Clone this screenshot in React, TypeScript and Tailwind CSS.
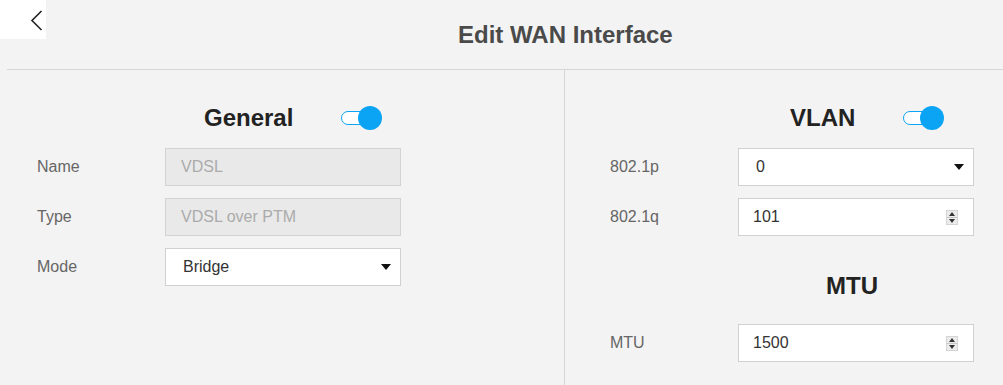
import React from 'react';

function Toggle() {
  return (
    <div className="relative w-[41px] h-[24px] shrink-0">
      <div className="absolute left-0 top-[5px] w-[32px] h-[14px] rounded-full border-[1.5px] border-[#0ba4f4] bg-white" />
      <div className="absolute right-0 top-0 w-[24px] h-[24px] rounded-full bg-[#0ba4f4]" />
    </div>
  );
}

function Caret() {
  return (
    <svg width="10" height="6" viewBox="0 0 10 6" className="shrink-0">
      <path d="M0 0 L10 0 L5 6 Z" fill="#111" />
    </svg>
  );
}

function Spinner() {
  return (
    <div className="w-[12px] h-[15px] shrink-0 flex flex-col border border-[#d4d4d4] bg-[#ececec]">
      <div className="flex-1 flex items-center justify-center border-b border-[#c8c8c8]">
        <svg width="6" height="4" viewBox="0 0 6 4"><path d="M0 4 L6 4 L3 0 Z" fill="#333" /></svg>
      </div>
      <div className="flex-1 flex items-center justify-center">
        <svg width="6" height="4" viewBox="0 0 6 4"><path d="M0 0 L6 0 L3 4 Z" fill="#333" /></svg>
      </div>
    </div>
  );
}

type Field =
  | { label: string; kind: 'disabled'; value: string }
  | { label: string; kind: 'select'; value: string }
  | { label: string; kind: 'number'; value: string };

function Row({ f }: { f: Field }) {
  return (
    <div className="flex items-center">
      <div className="w-[128px] text-[16px] text-[#666]">{f.label}</div>
      {f.kind === 'disabled' && (
        <div className="w-[236px] h-[38px] flex items-center pl-[15px] bg-[#e9e9e9] border border-[#d3d3d3] text-[16px] text-[#ababab]">
          {f.value}
        </div>
      )}
      {f.kind === 'select' && (
        <div className="w-[236px] h-[38px] flex items-center justify-between pl-[17px] pr-[9px] bg-white border border-[#d0d0d0] text-[16px] text-[#333]">
          <span>{f.value}</span>
          <Caret />
        </div>
      )}
      {f.kind === 'number' && (
        <div className="w-[236px] h-[38px] flex items-center justify-between pl-[14px] pr-[15px] bg-white border border-[#d0d0d0] text-[16px] text-[#333]">
          <span>{f.value}</span>
          <Spinner />
        </div>
      )}
    </div>
  );
}

const general: Field[] = [
  { label: 'Name', kind: 'disabled', value: 'VDSL' },
  { label: 'Type', kind: 'disabled', value: 'VDSL over PTM' },
  { label: 'Mode', kind: 'select', value: 'Bridge' },
];

const vlan: Field[] = [
  { label: '802.1p', kind: 'select', value: '0' },
  { label: '802.1q', kind: 'number', value: '101' },
];

export default function App() {
  return (
    <div className="w-[1003px] h-[385px] overflow-hidden bg-[#f3f3f3] font-['Liberation_Sans',Arial,sans-serif]">
      {/* Header */}
      <div className="flex items-start h-[69px]">
        <div className="w-[46px] h-[39px] bg-white shrink-0 pl-[30px] pt-[10px]">
          <svg width="13" height="21" viewBox="0 0 13 21">
            <path d="M11.5 1 L2 10.5 L11.5 20" fill="none" stroke="#222" strokeWidth="1.6" />
          </svg>
        </div>
        <h1 className="ml-[412px] mt-[21px] text-[24px] leading-[28px] font-bold text-[#4a4a4a]">
          Edit WAN Interface
        </h1>
      </div>
      <div className="ml-[7px] h-px bg-[#d6d6d6]" />

      <div className="flex h-[315px]">
        {/* General */}
        <div className="w-[564px] pt-[30px]">
          <div className="flex items-center h-[36px] pl-[204px]">
            <span className="w-[137px] text-[24px] font-bold text-[#222]">General</span>
            <Toggle />
          </div>
          <div className="mt-[12px] pl-[37px] flex flex-col gap-[12px]">
            {general.map((f) => <Row key={f.label} f={f} />)}
          </div>
        </div>

        {/* VLAN / MTU */}
        <div className="flex-1 border-l border-[#d6d6d6] pt-[30px]">
          <div className="flex items-center h-[36px] pl-[225px]">
            <span className="w-[113px] text-[24px] font-bold text-[#222]">VLAN</span>
            <Toggle />
          </div>
          <div className="mt-[12px] pl-[45px] flex flex-col gap-[12px]">
            {vlan.map((f) => <Row key={f.label} f={f} />)}
          </div>
          <div className="mt-[32px] flex items-center h-[36px] pl-[261px]">
            <span className="text-[24px] font-bold text-[#222]">MTU</span>
          </div>
          <div className="mt-[20px] pl-[45px]">
            <Row f={{ label: 'MTU', kind: 'number', value: '1500' }} />
          </div>
        </div>
      </div>
    </div>
  );
}
